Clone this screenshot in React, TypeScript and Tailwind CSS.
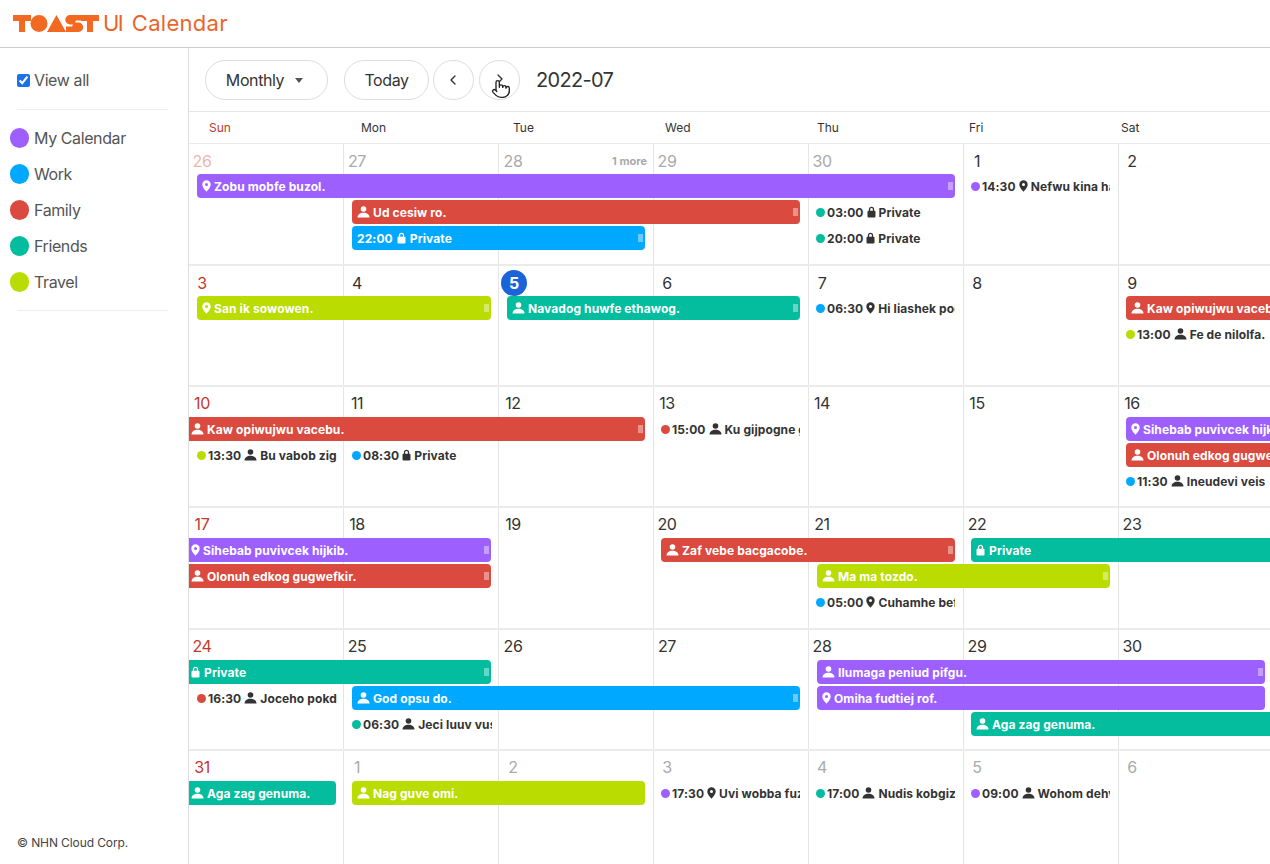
import * as React from 'react';
import { ChevronLeft, ChevronRight, Pointer } from 'lucide-react';

type IconName = 'person' | 'lock' | 'pin';

const BG = {
  purple: 'bg-[#9e5fff]',
  blue: 'bg-[#00a9ff]',
  red: 'bg-[#da4a3e]',
  teal: 'bg-[#03bd9e]',
  lime: 'bg-[#bbdc00]',
};
type Color = keyof typeof BG;

interface Bar {
  col: number;
  span: number;
  row: number;
  color: Color;
  icon: IconName;
  time?: string;
  text: string;
  fromPrev?: boolean;
  toNext?: boolean;
  noHandle?: boolean;
}

interface Timed {
  col: number;
  row: number;
  color: Color;
  icon: IconName;
  time: string;
  text: string;
}

interface DayCell {
  d: number;
  muted?: boolean;
  today?: boolean;
  more?: string;
}

interface Week {
  rowClass: string;
  datePad: string;
  days: DayCell[];
  bars: Bar[];
  timed: Timed[];
}

const nums = (list: number[], mutedUntil = 0, mutedFrom = 99): DayCell[] =>
  list.map((d, i) => ({ d, muted: i < mutedUntil || i >= mutedFrom }));

const weeks: Week[] = [
  {
    rowClass: 'h-[121px] border-t',
    datePad: 'pt-1',
    days: nums([26, 27, 28, 29, 30, 1, 2], 5).map((c) => (c.d === 28 ? { ...c, more: '1 more' } : c)),
    bars: [
      { col: 1, span: 5, row: 2, color: 'purple', icon: 'pin', text: 'Zobu mobfe buzol.' },
      { col: 2, span: 3, row: 3, color: 'red', icon: 'person', text: 'Ud cesiw ro.' },
      { col: 2, span: 2, row: 4, color: 'blue', icon: 'lock', time: '22:00', text: 'Private' },
    ],
    timed: [
      { col: 5, row: 3, color: 'teal', icon: 'lock', time: '03:00', text: 'Private' },
      { col: 5, row: 4, color: 'teal', icon: 'lock', time: '20:00', text: 'Private' },
      { col: 6, row: 2, color: 'purple', icon: 'pin', time: '14:30', text: 'Nefwu kina hazi' },
    ],
  },
  {
    rowClass: 'h-[121px] border-t-2',
    datePad: 'pt-1',
    days: nums([3, 4, 5, 6, 7, 8, 9]).map((c) => (c.d === 5 ? { ...c, today: true } : c)),
    bars: [
      { col: 1, span: 2, row: 2, color: 'lime', icon: 'pin', text: 'San ik sowowen.' },
      { col: 3, span: 2, row: 2, color: 'teal', icon: 'person', text: 'Navadog huwfe ethawog.' },
      { col: 7, span: 1, row: 2, color: 'red', icon: 'person', text: 'Kaw opiwujwu vacebu.', toNext: true },
    ],
    timed: [
      { col: 5, row: 2, color: 'blue', icon: 'pin', time: '06:30', text: 'Hi liashek pocu' },
      { col: 7, row: 3, color: 'lime', icon: 'person', time: '13:00', text: 'Fe de nilolfa.' },
    ],
  },
  {
    rowClass: 'h-[121px] border-t-2',
    datePad: 'pt-[3px]',
    days: nums([10, 11, 12, 13, 14, 15, 16]),
    bars: [
      { col: 1, span: 3, row: 2, color: 'red', icon: 'person', text: 'Kaw opiwujwu vacebu.', fromPrev: true },
      { col: 7, span: 1, row: 2, color: 'purple', icon: 'pin', text: 'Sihebab puvivcek hijkib.', toNext: true },
      { col: 7, span: 1, row: 3, color: 'red', icon: 'person', text: 'Olonuh edkog gugwefkir.', toNext: true },
    ],
    timed: [
      { col: 1, row: 3, color: 'lime', icon: 'person', time: '13:30', text: 'Bu vabob zigu' },
      { col: 2, row: 3, color: 'blue', icon: 'lock', time: '08:30', text: 'Private' },
      { col: 4, row: 2, color: 'red', icon: 'person', time: '15:00', text: 'Ku gijpogne gu' },
      { col: 7, row: 4, color: 'blue', icon: 'person', time: '11:30', text: 'Ineudevi veis' },
    ],
  },
  {
    rowClass: 'h-[122px] border-t-2',
    datePad: 'pt-[3px]',
    days: nums([17, 18, 19, 20, 21, 22, 23]),
    bars: [
      { col: 1, span: 2, row: 2, color: 'purple', icon: 'pin', text: 'Sihebab puvivcek hijkib.', fromPrev: true },
      { col: 1, span: 2, row: 3, color: 'red', icon: 'person', text: 'Olonuh edkog gugwefkir.', fromPrev: true },
      { col: 4, span: 2, row: 2, color: 'red', icon: 'person', text: 'Zaf vebe bacgacobe.' },
      { col: 6, span: 2, row: 2, color: 'teal', icon: 'lock', text: 'Private', toNext: true },
      { col: 5, span: 2, row: 3, color: 'lime', icon: 'person', text: 'Ma ma tozdo.' },
    ],
    timed: [{ col: 5, row: 4, color: 'blue', icon: 'pin', time: '05:00', text: 'Cuhamhe befo' }],
  },
  {
    rowClass: 'h-[121px] border-t-2',
    datePad: 'pt-[3px]',
    days: nums([24, 25, 26, 27, 28, 29, 30]),
    bars: [
      { col: 1, span: 2, row: 2, color: 'teal', icon: 'lock', text: 'Private', fromPrev: true },
      { col: 5, span: 3, row: 2, color: 'purple', icon: 'person', text: 'Ilumaga peniud pifgu.' },
      { col: 2, span: 3, row: 3, color: 'blue', icon: 'person', text: 'God opsu do.' },
      { col: 5, span: 3, row: 3, color: 'purple', icon: 'pin', text: 'Omiha fudtiej rof.', noHandle: true },
      { col: 6, span: 2, row: 4, color: 'teal', icon: 'person', text: 'Aga zag genuma.', toNext: true },
    ],
    timed: [
      { col: 1, row: 3, color: 'red', icon: 'person', time: '16:30', text: 'Joceho pokdu' },
      { col: 2, row: 4, color: 'teal', icon: 'person', time: '06:30', text: 'Jeci luuv vuse' },
    ],
  },
  {
    rowClass: 'h-[121px] border-t-2',
    datePad: 'pt-[3px]',
    days: nums([31, 1, 2, 3, 4, 5, 6], 0, 1),
    bars: [
      { col: 1, span: 1, row: 2, color: 'teal', icon: 'person', text: 'Aga zag genuma.', fromPrev: true, noHandle: true },
      { col: 2, span: 2, row: 2, color: 'lime', icon: 'person', text: 'Nag guve omi.', noHandle: true },
    ],
    timed: [
      { col: 4, row: 2, color: 'purple', icon: 'pin', time: '17:30', text: 'Uvi wobba fuze' },
      { col: 5, row: 2, color: 'teal', icon: 'person', time: '17:00', text: 'Nudis kobgiz' },
      { col: 6, row: 2, color: 'purple', icon: 'person', time: '09:00', text: 'Wohom dehvu' },
    ],
  },
];

const calendars: { name: string; color: Color }[] = [
  { name: 'My Calendar', color: 'purple' },
  { name: 'Work', color: 'blue' },
  { name: 'Family', color: 'red' },
  { name: 'Friends', color: 'teal' },
  { name: 'Travel', color: 'lime' },
];

const weekdays = ['Sun', 'Mon', 'Tue', 'Wed', 'Thu', 'Fri', 'Sat'];

// left inset of an event by starting column, the columns are not quite even
const startInset = ['ml-2', 'ml-[9px]', 'ml-[9px]', 'ml-2', 'ml-[9px]', 'ml-2', 'ml-2'];

function EventIcon({ name, className = '' }: { name: IconName; className?: string }) {
  if (name === 'person') {
    return (
      <svg width="13" height="12" viewBox="0 0 13 12" fill="currentColor" className={`shrink-0 ${className}`}>
        <circle cx="6.5" cy="3" r="2.8" />
        <path d="M0.5 11.5c0-3 2.6-4.8 6-4.8s6 1.800 6 4.800z" />
      </svg>
    );
  }
  if (name === 'lock') {
    return (
      <svg width="9" height="12" viewBox="0 0 9 12" fill="currentColor" className={`shrink-0 ${className}`}>
        <path d="M2.500 5V3.400a2 2 0 0 1 4 0V5" fill="none" stroke="currentColor" strokeWidth="1.300" />
        <rect x="0.500" y="4.800" width="8" height="6.800" rx="1" />
      </svg>
    );
  }
  return (
    <svg width="9" height="12" viewBox="0 0 9 12" className={`shrink-0 ${className}`}>
      <path
        fillRule="evenodd"
        fill="currentColor"
        d="M4.500.3a4.200 4.200 0 0 1 4.200 4.200c0 2.600-2.700 5.600-4.200 7.200C3 10.100.3 7.100.3 4.500A4.200 4.200 0 0 1 4.500.3zm0 2.700a1.500 1.500 0 1 0 0 3 1.500 1.500 0 0 0 0-3z"
      />
    </svg>
  );
}

function Logo() {
  return (
    <div className="flex items-center gap-1 text-[#e8662c]">
      <svg width="86" height="17" viewBox="0 0 86 17" fill="#f26a21">
        <path d="M0 0h18v6h-6v11H6V6H0z" />
        <circle cx="26" cy="8.500" r="8.500" />
        <path d="M43.500 0l9.500 17H34z" />
        <path d="M57 0h12v5.500h-6l-1 2h3.500a4.500 4.500 0 0 1 0 9.500H53v-5.500h6l1-2h-3a4.500 4.500 0 0 1 0-9.500z" />
        <path d="M68 0h18v6h-6v11h-6V6h-6z" />
      </svg>
      <span className="text-[22px] leading-none tracking-[0.3px] [word-spacing:3px] -mt-px">
        <span className="tracking-[-1.5px]">UI</span> Calendar
      </span>
    </div>
  );
}

function Sidebar() {
  return (
    <aside className="w-[189px] shrink-0 border-r border-[#ddd] flex flex-col px-[17px] pt-[23px] pb-[13px] text-[#555] tracking-tight">
      <label className="flex items-center gap-1 text-base leading-[18px] mb-5">
        <input type="checkbox" defaultChecked className="w-[13px] h-[13px] accent-[#1a73e8]" />
        View all
      </label>
      <div className="h-px bg-[#eee] mr-[3px]" />
      <ul className="flex flex-col gap-4 pt-[18px] pb-[18px] -ml-[7px]">
        {calendars.map((c) => (
          <li key={c.name} className="flex items-center gap-[5px] text-base leading-5">
            <span className={`w-[19px] h-5 rounded-full ${BG[c.color]}`} />
            {c.name}
          </li>
        ))}
      </ul>
      <div className="h-px bg-[#eee] mr-[3px]" />
      <p className="mt-auto text-xs text-[#444] tracking-[-0.1px]">© NHN Cloud Corp.</p>
    </aside>
  );
}

function Toolbar() {
  const btn = 'h-10 rounded-full border border-[#ddd] bg-white flex items-center justify-center text-[#333]';
  return (
    <div className="h-[63px] shrink-0 flex items-center pl-4 pt-px">
      <button className={`${btn} w-[123px] gap-[11px] pr-1 text-base tracking-tight`}>
        Monthly
        <svg width="8" height="5" viewBox="0 0 8 5" fill="#555"><path d="M0 0h8L4 5z" /></svg>
      </button>
      <button className={`${btn} w-[85px] ml-4 text-base tracking-tight`}>Today</button>
      <button className={`${btn} w-[41px] ml-1`} aria-label="Previous">
        <ChevronLeft size={16} strokeWidth={2} className="-ml-0.5" />
      </button>
      <button className={`${btn} w-[41px] ml-[5px] border-[#aaa] relative`} aria-label="Next">
        <ChevronRight size={16} strokeWidth={2} className="-mt-0.5" />
        <Pointer size={20} strokeWidth={1.6} fill="#fff" className="absolute left-[11px] top-[18px] text-[#222]" />
      </button>
      <span className="ml-4 text-xl text-[#333] tracking-[-0.035em]">2022-07</span>
    </div>
  );
}

function EventBar({ bar }: { bar: Bar }) {
  const lastCol = bar.col + bar.span - 1;
  let right = 'mr-2';
  if (bar.toNext) right = 'mr-0';
  else if (lastCol <= 2) right = 'mr-[7px]';
  return (
    <div
      className={`${BG[bar.color]} ${bar.fromPrev ? 'ml-0 pl-[2px] rounded-r-sm' : `${startInset[bar.col - 1]} pl-[5px] rounded-sm`} ${right} h-6 flex items-center gap-[3px] pr-[2px] text-white text-xs font-bold tracking-[0.1px] whitespace-nowrap overflow-hidden min-w-0`}
      style={{ gridColumn: `${bar.col} / span ${bar.span}`, gridRow: bar.row }}
    >
      {bar.time && <span className="mr-px pt-px">{bar.time}</span>}
      <EventIcon name={bar.icon} className={bar.icon === 'lock' ? 'mr-px' : ''} />
      <span className="pt-px">{bar.text}</span>
      {!bar.toNext && !bar.noHandle && <span className="ml-auto w-[5px] h-2 shrink-0 bg-white/40" />}
    </div>
  );
}

function TimedEvent({ ev }: { ev: Timed }) {
  return (
    <div
      className={`${ev.col === 2 ? 'ml-[9px]' : 'ml-2'} ${ev.col <= 2 ? 'mr-[6px]' : 'mr-2'} h-6 flex items-center gap-[3px] text-[#333] text-xs font-bold tracking-[0.1px] whitespace-nowrap overflow-hidden min-w-0`}
      style={{ gridColumn: ev.col, gridRow: ev.row }}
    >
      <span className={`${BG[ev.color]} w-[9px] h-[9px] rounded-full shrink-0 -mr-px`} />
      <span className="pt-px">{ev.time}</span>
      <EventIcon name={ev.icon} />
      <span className="pt-px">{ev.text}</span>
    </div>
  );
}

function DayNumber({ cell, col }: { cell: DayCell; col: number }) {
  if (cell.today) {
    return (
      <span className="w-[26px] h-[26px] ml-0.5 rounded-full bg-[#1b63d8] text-white text-base font-bold flex items-center justify-center">
        {cell.d}
      </span>
    );
  }
  let color = 'text-[#333]';
  if (col === 1) color = cell.muted ? 'text-[#eeb6ae]' : 'text-[#c0392b]';
  else if (cell.muted) color = 'text-[#aaa]';
  return <span className={`w-[26px] h-[26px] text-base tracking-tight flex items-center justify-center ${col === 3 ? 'ml-px' : ''} ${color}`}>{cell.d}</span>;
}

function WeekRow({ week }: { week: Week }) {
  return (
    <div className={`${week.rowClass} shrink-0 border-[#ebebeb] grid grid-cols-[154px_repeat(6,155px)] grid-rows-[28px_24px_24px_24px_1fr] gap-y-0.5`}>
      {week.days.map((cell, i) => (
        <div
          key={i}
          className={`row-span-full flex items-start justify-between ${week.datePad} pr-1.5 ${i > 0 ? 'border-l border-[#e5e5e5]' : ''}`}
          style={{ gridColumn: i + 1, gridRowStart: 1 }}
        >
          <DayNumber cell={cell} col={i + 1} />
          {cell.more && <span className="text-[11px] font-bold text-[#aaa] leading-[26px]">{cell.more}</span>}
        </div>
      ))}
      {week.bars.map((b) => (
        <EventBar key={`${b.col}-${b.row}`} bar={b} />
      ))}
      {week.timed.map((t) => (
        <TimedEvent key={`${t.col}-${t.row}`} ev={t} />
      ))}
    </div>
  );
}

export default function App() {
  return (
    <div className="h-screen w-full overflow-hidden flex flex-col bg-white font-['Inter',sans-serif]">
      <header className="h-12 shrink-0 border-b border-[#ccc] flex items-center pl-[13px]">
        <Logo />
      </header>
      <div className="flex-1 flex min-h-0">
        <Sidebar />
        <main className="flex-1 min-w-0 overflow-hidden flex flex-col">
          <Toolbar />
          <div className="h-8 shrink-0 border-t border-[#e5e5e5] grid grid-cols-[repeat(7,152px)] pl-5 items-center">
            {weekdays.map((w) => (
              <span key={w} className={`text-xs ${w === 'Sun' ? 'text-[#c0392b]' : 'text-[#333]'}`}>{w}</span>
            ))}
          </div>
          {weeks.map((w, i) => (
            <WeekRow key={i} week={w} />
          ))}
        </main>
      </div>
    </div>
  );
}
